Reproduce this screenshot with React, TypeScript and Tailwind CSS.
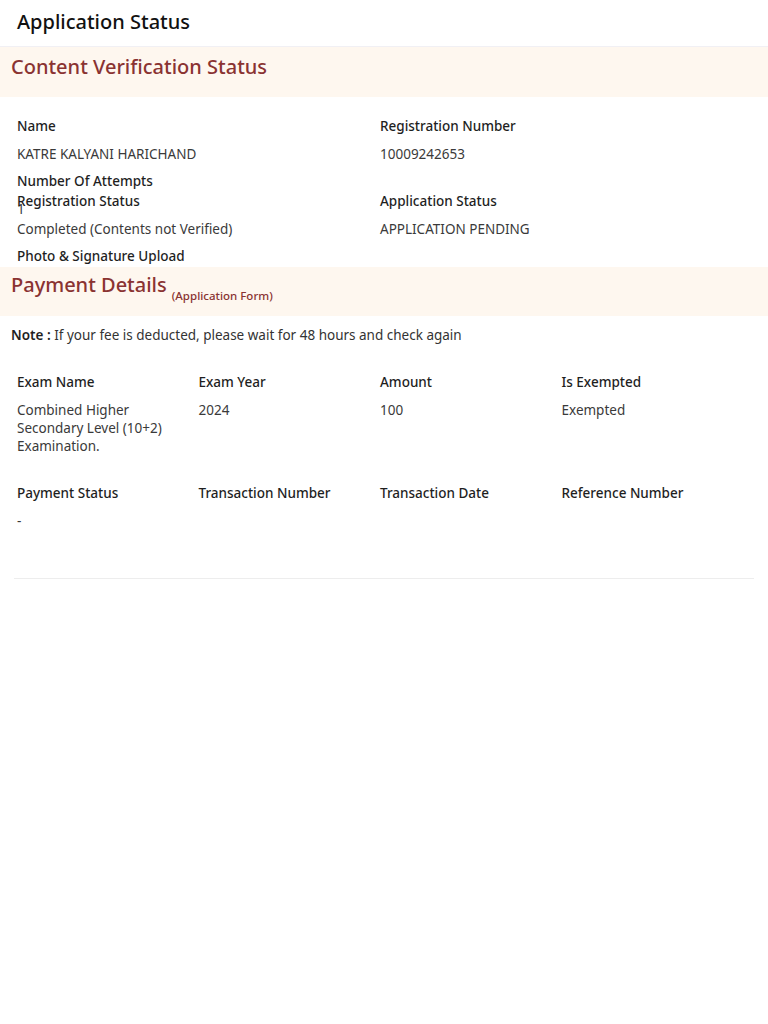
const font = { fontFamily: '"Noto Sans", "Open Sans", sans-serif' }

type FieldProps = {
  label: string
  value?: string
  className?: string
}

function Field({ label, value, className = '' }: FieldProps) {
  return (
    <div className={className}>
      <div className="text-[13.5px] leading-5 font-medium text-[#1f1f1f]">{label}</div>
      {value !== undefined && (
        <div className="mt-2 text-[13.5px] leading-5 text-[#3a3a3a]">{value}</div>
      )}
    </div>
  )
}

function Band({ title, sub, className = '' }: { title: string; sub?: string; className?: string }) {
  return (
    <div className={`bg-[#fef7ef] px-[11px] ${className}`}>
      <h3 className="text-[20px] leading-7 font-medium text-[#8a3332]">
        {title}
        {sub && <span className="ml-[5px] align-[-8px] text-[11.5px] font-medium">{sub}</span>}
      </h3>
    </div>
  )
}

const examRow = [
  { label: 'Exam Name', value: 'Combined Higher Secondary Level (10+2) Examination.' },
  { label: 'Exam Year', value: '2024' },
  { label: 'Amount', value: '100' },
  { label: 'Is Exempted', value: 'Exempted' },
]

const paymentRow = [
  { label: 'Payment Status', value: '-' },
  { label: 'Transaction Number', value: '' },
  { label: 'Transaction Date', value: '' },
  { label: 'Reference Number', value: '' },
]

function Cell({ label, value }: { label: string; value: string }) {
  return (
    <div className="pr-4">
      <div className="text-[13.5px] leading-[18px] font-medium text-[#1f1f1f]">{label}</div>
      <div className="mt-[10px] min-h-[18px] text-[13.5px] leading-[18px] text-[#3a3a3a]">{value}</div>
    </div>
  )
}

export default function App() {
  return (
    <div className="min-h-[1024px] w-[768px] bg-white" style={font}>
      <div className="h-[47px] border-b border-[#f1f0f4] px-[17px] pt-[8px]">
        <h1 className="text-[20px] leading-7 font-medium text-[#111]">Application Status</h1>
      </div>

      <Band title="Content Verification Status" className="h-[50px] pt-[6px]" />

      <div className="ml-[17px] grid w-[726px] grid-cols-2 pt-[19px]">
        <div className="flex flex-col">
          <Field label="Name" value="KATRE KALYANI HARICHAND" className="h-[55px]" />
          <Field label="Number Of Attempts" value="1" className="h-[20px]" />
          <Field label="Registration Status" value="Completed (Contents not Verified)" className="h-[55px]" />
          <Field label="Photo & Signature Upload" className="h-[21px]" />
        </div>
        <div className="flex flex-col">
          <Field label="Registration Number" value="10009242653" className="h-[75px]" />
          <Field label="Application Status" value="APPLICATION PENDING" />
        </div>
      </div>

      <Band title="Payment Details" sub="(Application Form)" className="h-[49px] pt-1" />

      <p className="mt-[9px] px-[11px] text-[13.5px] leading-5 text-[#333]">
        <span className="font-semibold text-[#1f1f1f]">Note :</span> If your fee is deducted, please wait for 48 hours and check again
      </p>

      <div className="ml-[17px] mt-[28px] grid w-[726px] grid-cols-4">
        {examRow.map((c) => (
          <Cell key={c.label} {...c} />
        ))}
      </div>

      <div className="ml-[17px] mt-[29px] grid w-[726px] grid-cols-4">
        {paymentRow.map((c) => (
          <Cell key={c.label} {...c} />
        ))}
      </div>

      <div className="mx-[14px] mt-[48px] border-t border-[#ededed]" />
    </div>
  )
}
